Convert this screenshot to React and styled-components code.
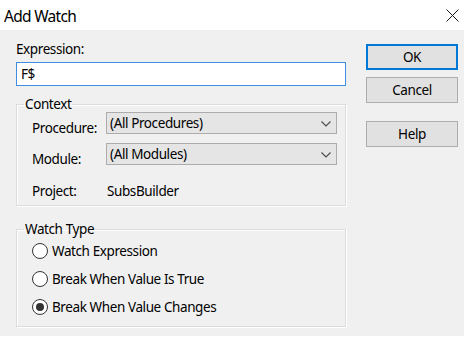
import React from 'react';
import styled, { createGlobalStyle } from 'styled-components';

const GlobalStyle = createGlobalStyle`
  html, body {
    margin: 0;
    padding: 0;
    background: #ffffff;
  }
  body {
    font-family: "Noto Sans", "Open Sans", sans-serif;
    font-size: 13.5px;
    letter-spacing: -0.4px;
    color: #000;
  }
`;

const AddWatchDialog = () => {
  return (
    <Window>
      <TitleBar>
        <Title>Add Watch</Title>
        <CloseButton aria-label="Close">
          <svg width="13" height="13" viewBox="0 0 13 13">
            <path d="M0.5 0.5 L12.5 12.5 M12.5 0.5 L0.5 12.5" stroke="#1a1a1a" strokeWidth="1" fill="none" />
          </svg>
        </CloseButton>
      </TitleBar>

      <Body>
        <Main>
          <FieldLabel>Expression:</FieldLabel>
          <TextInput value="F$" readOnly />

          <Group>
            <Legend>Context</Legend>
            <ContextGrid>
              <RowLabel>Procedure:</RowLabel>
              <Select>
                <span>(All Procedures)</span>
                <Chevron />
              </Select>

              <RowLabel>Module:</RowLabel>
              <Select>
                <span>(All Modules)</span>
                <Chevron />
              </Select>

              <RowLabel $last>Project:</RowLabel>
              <RowLabel $last $value>SubsBuilder</RowLabel>
            </ContextGrid>
          </Group>

          <Group $spaced>
            <Legend>Watch Type</Legend>
            <RadioOption label="Watch Expression" />
            <RadioOption label="Break When Value Is True" />
            <RadioOption label="Break When Value Changes" checked />
          </Group>
        </Main>

        <Side>
          <Button $default>OK</Button>
          <Button>Cancel</Button>
          <Button $gapTop>Help</Button>
        </Side>
      </Body>
    </Window>
  );
};

const Chevron = () => (
  <ChevronBox>
    <svg width="10" height="6" viewBox="0 0 10 6">
      <path d="M0.5 0.5 L5 5 L9.5 0.5" stroke="#4a4a4a" strokeWidth="1.1" fill="none" />
    </svg>
  </ChevronBox>
);

const RadioOption = ({ label, checked }) => (
  <RadioRow>
    <RadioCircle>{checked && <RadioDot />}</RadioCircle>
    <span>{label}</span>
  </RadioRow>
);

export default function App() {
  return (
    <>
      <GlobalStyle />
      <AddWatchDialog />
    </>
  );
}

const Window = styled.div`
  width: 474px;
  height: 338px;
  display: flex;
  flex-direction: column;
  background: #ffffff;
  overflow: hidden;
`;

const TitleBar = styled.div`
  height: 30px;
  flex: none;
  display: flex;
  align-items: center;
  justify-content: space-between;
  padding: 0 15px 0 4px;
  background: #ffffff;
`;

const Title = styled.div`
  font-size: 15.5px;
  letter-spacing: -0.7px;
  line-height: 20px;
  padding-top: 1px;
`;

const CloseButton = styled.div`
  display: flex;
  width: 13px;
  height: 13px;
`;

const Body = styled.div`
  flex: 1;
  display: flex;
  gap: 20px;
  padding: 8px 0 0 16px;
  margin: 0 10px 2px 0;
  background: #f0f0f0;
`;

const Main = styled.div`
  width: 330px;
  display: flex;
  flex-direction: column;
`;

const FieldLabel = styled.div`
  line-height: 20px;
  padding-top: 1px;
  margin-bottom: -1px;
`;

const TextInput = styled.input`
  margin-top: 4px;
  height: 24px;
  box-sizing: border-box;
  border: 1px solid #3d8ee0;
  background: #ffffff;
  padding: 0 4px;
  font: inherit;
  letter-spacing: inherit;
  color: #000;
  outline: none;
`;

const Group = styled.fieldset`
  margin: ${(p) => (p.$spaced ? '15px' : '10px')} 0 0;
  padding: 0 8px ${(p) => (p.$spaced ? '5px' : '3px')} 15px;
  border: 1px solid #dcdcdc;
  box-shadow: 1px 1px 0 #ffffff, inset 1px 1px 0 #ffffff;
  min-width: 0;
`;

const Legend = styled.legend`
  margin-left: -8px;
  padding: 0 1px;
  line-height: 16px;
`;

const ContextGrid = styled.div`
  display: grid;
  grid-template-columns: 74px 1fr;
  row-gap: 4px;
  align-items: start;
`;

const RowLabel = styled.div`
  line-height: 22px;
  padding-top: ${(p) => (p.$last ? '6px' : '5px')};
  padding-left: ${(p) => (p.$value ? '1px' : '0')};
`;

const Select = styled.div`
  height: 22px;
  box-sizing: border-box;
  display: flex;
  align-items: center;
  justify-content: space-between;
  padding: 0 5px 0 3px;
  border: 1px solid #acacac;
  background: #e5e5e5;
  line-height: 20px;
`;

const ChevronBox = styled.span`
  display: flex;
  padding-top: 1px;
`;

const RadioRow = styled.div`
  height: 28px;
  display: flex;
  align-items: center;
  gap: 4px;
`;

const RadioCircle = styled.span`
  width: 16px;
  height: 16px;
  box-sizing: border-box;
  border-radius: 50%;
  border: 1px solid #333333;
  background: #ffffff;
  display: flex;
  align-items: center;
  justify-content: center;
  flex: none;
`;

const RadioDot = styled.span`
  width: 8px;
  height: 8px;
  border-radius: 50%;
  background: #333333;
`;

const Side = styled.div`
  width: 92px;
  padding-top: 6px;
  display: flex;
  flex-direction: column;
  gap: 7px;
`;

const Button = styled.div`
  height: 26px;
  box-sizing: border-box;
  display: flex;
  align-items: center;
  justify-content: center;
  background: #e1e1e1;
  border: 1px solid ${(p) => (p.$default ? '#0078d7' : '#adadad')};
  box-shadow: ${(p) => (p.$default ? 'inset 0 0 0 1px #0078d7' : 'none')};
  margin-top: ${(p) => (p.$gapTop ? '11px' : '0')};
`;
